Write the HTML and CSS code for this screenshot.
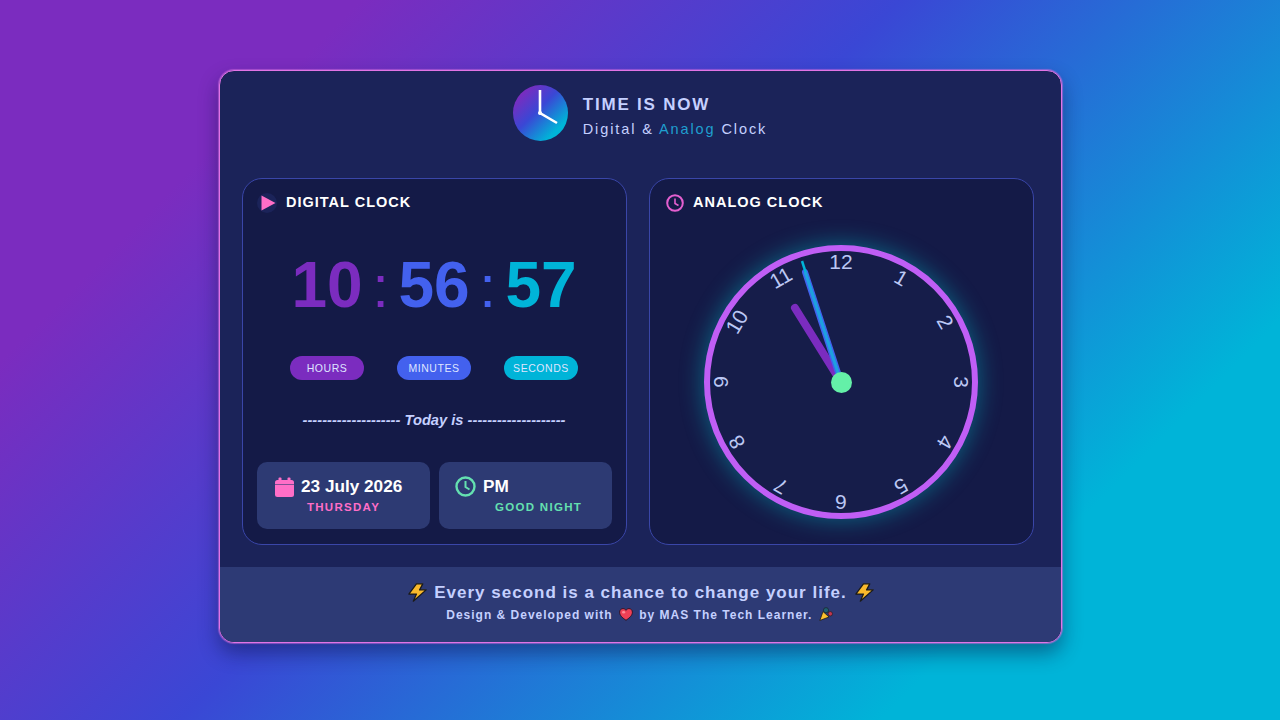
FILE: index.html
```html
<!DOCTYPE html>
<html>
    <head>
        <meta charset="UTF-8">
        <meta name="viewport" content="width=device-width, initial-scale=1.0">
        <title>Digital and Analog Clock</title>
        <link rel="stylesheet" href="styles.css">
    </head>
    <body>
        <div class="container">
            <div class="header">
                <div class="logo">
                    <svg width="55" height="56" viewBox="0 0 55 56">
                        <path d="M27 5V28L44 38" fill="none" stroke="#fff" stroke-width="2.6"/>
                        <circle cx="27" cy="28" r="2" fill="#fff"/>
                    </svg>
                </div>
                <div class="title">
                    <h1>TIME IS NOW</h1>
                    <p>Digital &amp; <span>Analog</span> Clock</p>
                </div>
            </div>

            <div class="panels">
                <div class="panel">
                    <div class="panel-title title-digital">
                        <span class="panel-icon play">
                            <svg width="15" height="16" viewBox="0 0 15 16"><path d="M0.5 0.5L14.5 8L0.5 15.5Z" fill="#ff6ec7"/></svg>
                        </span>
                        <h2>DIGITAL CLOCK</h2>
                    </div>

                    <div class="time">
                        <div class="digits hours">10</div>
                        <div class="colon hours">:</div>
                        <div class="digits minutes">56</div>
                        <div class="colon minutes">:</div>
                        <div class="digits seconds">57</div>
                    </div>

                    <div class="labels">
                        <div class="label label-hours">HOURS</div>
                        <div class="label label-minutes">MINUTES</div>
                        <div class="label label-seconds">SECONDS</div>
                    </div>

                    <p class="today">-------------------- Today is --------------------</p>

                    <div class="info">
                        <div class="info-box">
                            <div class="info-main date-main">
                                <svg width="19" height="20" viewBox="0 0 19 20">
                                    <rect x="0" y="3" width="19" height="17" rx="2.5" fill="#ff6ec7"/>
                                    <rect x="3.5" y="0.5" width="3" height="4" rx="1" fill="#ff6ec7"/>
                                    <rect x="12.5" y="0.5" width="3" height="4" rx="1" fill="#ff6ec7"/>
                                    <rect x="0" y="7" width="19" height="0.6" fill="#2d3a73"/>
                                </svg>
                                <span>23 July 2026</span>
                            </div>
                            <div class="info-sub day">THURSDAY</div>
                        </div>
                        <div class="info-box">
                            <div class="info-main period-main">
                                <svg width="21" height="21" viewBox="0 0 21 21">
                                    <circle cx="10.5" cy="10.5" r="9" fill="none" stroke="#64e0b0" stroke-width="2.4"/>
                                    <path d="M10.5 5V11L14.5 13.5" fill="none" stroke="#64e0b0" stroke-width="2"/>
                                </svg>
                                <span>PM</span>
                            </div>
                            <div class="info-sub greeting">GOOD NIGHT</div>
                        </div>
                    </div>
                </div>

                <div class="panel">
                    <div class="panel-title title-analog">
                        <span class="panel-icon">
                            <svg width="18" height="18" viewBox="0 0 18 18">
                                <circle cx="9" cy="9" r="7.8" fill="none" stroke="#e45fd0" stroke-width="2"/>
                                <path d="M9 4.5V9.5L12.5 11.5" fill="none" stroke="#e45fd0" stroke-width="1.6"/>
                            </svg>
                        </span>
                        <h2>ANALOG CLOCK</h2>
                    </div>

                    <div class="clock">
                        <span class="num" style="--a:30deg">1</span>
                        <span class="num" style="--a:60deg">2</span>
                        <span class="num" style="--a:90deg">3</span>
                        <span class="num" style="--a:120deg">4</span>
                        <span class="num" style="--a:150deg">5</span>
                        <span class="num" style="--a:180deg">6</span>
                        <span class="num" style="--a:210deg">7</span>
                        <span class="num" style="--a:240deg">8</span>
                        <span class="num" style="--a:270deg">9</span>
                        <span class="num" style="--a:300deg">10</span>
                        <span class="num" style="--a:330deg">11</span>
                        <span class="num" style="--a:360deg">12</span>
                        <svg class="hands" width="274" height="274" viewBox="0 0 274 274">
                            <line x1="137" y1="137" x2="91" y2="63" stroke="#7b2cbf" stroke-width="8" stroke-linecap="round"/>
                            <line x1="137" y1="137" x2="101" y2="27" stroke="#4361ee" stroke-width="6" stroke-linecap="round"/>
                            <line x1="137" y1="137" x2="98" y2="16" stroke="#00b4d8" stroke-width="2.5"/>
                            <line x1="137" y1="137" x2="101" y2="27" stroke="#1f9fe0" stroke-width="3"/>
                        </svg>
                        <div class="pin"></div>
                    </div>
                </div>
            </div>

            <div class="footer">
                <p class="quote">
                    <svg class="emoji bolt" width="19" height="19" viewBox="0 0 18 18"><path d="M8 0.8H14L11 6.5H17.2L5 17.2L8 10.5H0.8Z" fill="#f9b92c" stroke="#1a1a1a" stroke-width="1.2" stroke-linejoin="round"/></svg>
                    Every second is a chance to change your life.
                    <svg class="emoji bolt" width="19" height="19" viewBox="0 0 18 18"><path d="M8 0.8H14L11 6.5H17.2L5 17.2L8 10.5H0.8Z" fill="#f9b92c" stroke="#1a1a1a" stroke-width="1.2" stroke-linejoin="round"/></svg>
                </p>
                <p class="credit">
                    Design &amp; Developed with
                    <svg class="emoji" width="14" height="13" viewBox="0 0 14 13"><path d="M7 12.3C3 9.5 0.6 7.2 0.6 4.2C0.6 2 2.2 0.6 4 0.6C5.3 0.6 6.4 1.2 7 2.3C7.6 1.2 8.7 0.6 10 0.6C11.8 0.6 13.4 2 13.4 4.2C13.4 7.2 11 9.5 7 12.3Z" fill="#ef4056" stroke="#2a1428" stroke-width="1"/><ellipse cx="4.6" cy="4.2" rx="1.6" ry="1.2" fill="#ff8a94"/></svg>
                    by MAS The Tech Learner.
                    <svg class="emoji" width="14" height="14" viewBox="0 0 14 14"><path d="M0.8 13.5L4 4.5L10 10Z" fill="#fbc02d" stroke="#1a1a1a" stroke-width="0.8" stroke-linejoin="round"/><circle cx="7" cy="3.2" r="2.6" fill="#1f5f70" stroke="#1a1a1a" stroke-width="0.6"/><circle cx="11.3" cy="6.8" r="2.2" fill="#c0364f" stroke="#1a1a1a" stroke-width="0.6"/></svg>
                </p>
            </div>
        </div>
    </body>
</html>
```

FILE: styles.css
```css
*{
    box-sizing: border-box;
    font-family: "Liberation Sans", Arial, sans-serif;
}

body{
    margin: 0;
    height: 720px;
    overflow: hidden;
    background: linear-gradient(135deg, #7b2cbf 0%, #7b2cbf 18%, #3a47d5 45%, #00b4d8 80%, #00b4d8 100%);
    display: flex;
    justify-content: center;
    padding-top: 70px;
}

.container{
    width: 843px;
    height: 573px;
    margin-left: 1px;
    background-color: #1b2359;
    border: 1px solid #e274e6;
    border-radius: 15px;
    box-shadow: 0 0 1px 1px rgba(214, 110, 226, 0.55), 0 10px 20px rgba(10, 15, 60, 0.45);
    overflow: hidden;
}

.header{
    height: 107px;
    padding-top: 14px;
    display: flex;
    justify-content: center;
    gap: 15px;
    margin-left: -1px;
}

.logo{
    width: 55px;
    height: 56px;
    border-radius: 50%;
    background: linear-gradient(135deg, #7b2cbf 15%, #3a47d5 45%, #00b4d8 80%);
}

.title h1{
    font-size: 17px;
    font-weight: bold;
    letter-spacing: 1.8px;
    color: #c5d0ff;
    margin: 10px 0 0 0;
    line-height: 20px;
}

.title p{
    font-size: 14.5px;
    letter-spacing: 1.9px;
    color: #c5d0ff;
    margin: 5px 0 0 0;
    line-height: 18px;
}

.title span{
    color: #1f9fd0;
}

.panels{
    display: grid;
    grid-template-columns: 385px 385px;
    gap: 22px;
    padding-left: 22px;
}

.panel{
    height: 367px;
    background-color: #141a47;
    border: 1px solid #3a46a8;
    border-radius: 20px;
    padding: 13px 15px 13px 14px;
}

.panel-title{
    display: flex;
    align-items: center;
    height: 22px;
}

.title-digital{
    gap: 9px;
}

.title-analog{
    gap: 8px;
    padding-left: 1px;
}

.panel-title h2{
    font-size: 14.5px;
    font-weight: bold;
    letter-spacing: 1px;
    color: #fff;
    margin: 0 0 2px 0;
}

.panel-icon{
    width: 20px;
    height: 20px;
    border-radius: 50%;
    display: flex;
    align-items: center;
    justify-content: center;
}

.play{
    background-color: #1b2359;
    padding-left: 2px;
}

.time{
    display: flex;
    justify-content: center;
    align-items: baseline;
    margin-top: 36px;
    height: 70px;
}

.digits{
    width: 74px;
    font-size: 64px;
    font-weight: bold;
    text-align: center;
    line-height: 70px;
}

.colon{
    width: 33px;
    font-size: 60px;
    text-align: center;
    line-height: 70px;
}

.hours{
    color: #7b2cbf;
}

.minutes{
    color: #4361ee;
}

.seconds{
    color: #00b4d8;
}

.labels{
    display: flex;
    justify-content: center;
    gap: 33px;
    margin-top: 36px;
}

.label{
    width: 74px;
    height: 24px;
    border-radius: 12px;
    font-size: 10.5px;
    letter-spacing: 0.55px;
    color: #dfe5ff;
    text-align: center;
    line-height: 24px;
}

.label-hours{
    background-color: #7b2cbf;
}

.label-minutes{
    background-color: #4361ee;
}

.label-seconds{
    background-color: #00b4d8;
}

.today{
    font-size: 14.7px;
    font-weight: bold;
    font-style: italic;
    color: #c5d0ff;
    text-align: center;
    margin: 31px 0 0 0;
    line-height: 18px;
    white-space: nowrap;
}

.info{
    display: grid;
    grid-template-columns: 173px 173px;
    gap: 9px;
    margin-top: 33px;
}

.info-box{
    height: 67px;
    background-color: #2d3a73;
    border-radius: 10px;
    padding-top: 14px;
}

.info-main{
    display: flex;
    align-items: center;
    height: 21px;
    font-size: 17.2px;
    font-weight: bold;
    color: #fff;
}

.date-main{
    padding-left: 18px;
    gap: 7px;
}

.period-main{
    padding-left: 16px;
    gap: 7px;
}

.info-sub{
    font-size: 11.5px;
    font-weight: bold;
    letter-spacing: 1.3px;
    line-height: 14px;
    margin-top: 3px;
}

.day{
    color: #ff6ec7;
    text-align: center;
}

.greeting{
    color: #64e0b0;
    padding-left: 56px;
}

.clock{
    position: relative;
    width: 274px;
    height: 274px;
    margin: 31px 0 0 40px;
    border: 6px solid #c05ef5;
    border-radius: 50%;
    background-color: #161d4a;
    box-shadow: 0 0 22px 2px rgba(0, 195, 205, 0.4);
}

.num{
    position: absolute;
    left: 50%;
    top: 50%;
    width: 40px;
    height: 28px;
    margin: -14px 0 0 -20px;
    font-size: 21px;
    line-height: 28px;
    text-align: center;
    color: #bcc8f5;
    transform: rotate(var(--a)) translateY(-120px);
}

.hands{
    position: absolute;
    left: -6px;
    top: -6px;
}

.pin{
    position: absolute;
    left: 50%;
    top: 50%;
    width: 21px;
    height: 21px;
    margin: -10.5px 0 0 -10.5px;
    border-radius: 50%;
    background-color: #64f0a8;
}

.footer{
    margin-top: 22px;
    height: 75px;
    background-color: #2d3a75;
    padding-top: 16px;
    text-align: center;
}

.footer p{
    margin: 0;
    color: #c5d0ff;
    font-weight: bold;
}

.quote{
    font-size: 17px;
    letter-spacing: 1px;
    line-height: 20px;
}

.footer .credit{
    font-size: 12px;
    letter-spacing: 1px;
    line-height: 16px;
    margin-top: 4px;
}

.emoji{
    vertical-align: middle;
    margin: -3px 2px 0 2px;
}

.bolt{
    margin: -3px 2px 0 3px;
}
```
